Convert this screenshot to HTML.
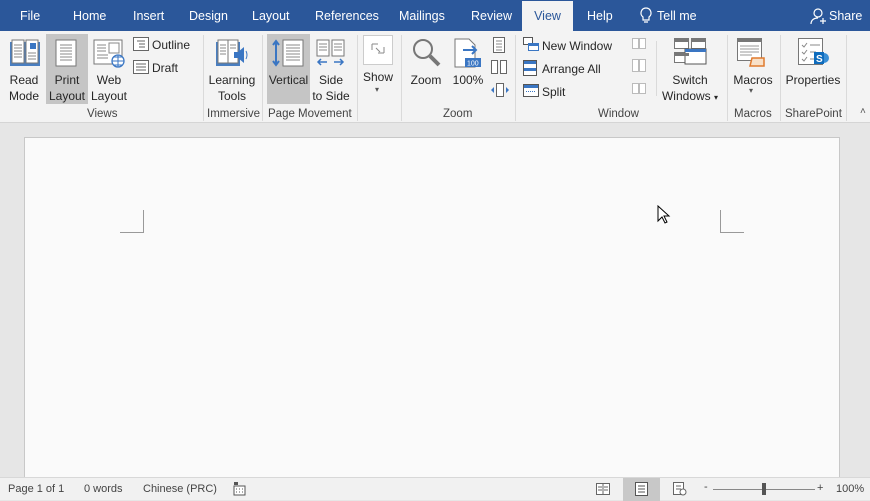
<!DOCTYPE html>
<html><head><meta charset="utf-8"><style>
*{margin:0;padding:0;box-sizing:border-box}
body{width:870px;height:500px;overflow:hidden;position:relative;background:#e6e6e6;font-family:"Liberation Sans",sans-serif;font-size:12px;color:#262626}
.a{position:absolute;white-space:nowrap}
#top{position:absolute;left:0;top:0;width:870px;height:31px;background:#2b579a}
.t{position:absolute;top:9px;color:#fff;font-size:12.5px}
#view{position:absolute;left:522px;top:1px;width:51px;height:30px;background:#f3f3f3;color:#2b579a;text-align:center;padding-top:8px;font-size:12.5px}
#rib{position:absolute;left:0;top:31px;width:870px;height:92px;background:#f3f3f3;border-bottom:1px solid #d5d5d5}
.sep{position:absolute;top:4px;width:1px;height:86px;background:#dadada}
.gl{position:absolute;top:77px;color:#444;font-size:11.5px}
.lbl{position:absolute;text-align:center;line-height:16px;font-size:12px}
.sel{position:absolute;background:#c5c5c5}
#page{position:absolute;left:24px;top:137px;width:816px;height:345px;background:#fafafa;border:1px solid #c8c8c8}
#status{position:absolute;left:0;top:477px;width:870px;height:23px;background:#f1f1f1;border-top:1px solid #d8d8d8;font-size:11px;color:#444}
svg{position:absolute}
</style></head><body>
<div id="top">
<span class="t" style="left:20px">File</span>
<span class="t" style="left:73px">Home</span>
<span class="t" style="left:133px">Insert</span>
<span class="t" style="left:189px">Design</span>
<span class="t" style="left:252px">Layout</span>
<span class="t" style="left:315px">References</span>
<span class="t" style="left:399px">Mailings</span>
<span class="t" style="left:471px">Review</span>
<span class="t" style="left:587px">Help</span>
<svg style="left:639px;top:7px" width="14" height="18" viewBox="0 0 14 18"><path d="M7 1a5 5 0 0 0-3 9v3h6v-3a5 5 0 0 0-3-9zM5 15h4" stroke="#fff" fill="none" stroke-width="1.2"/></svg>
<span class="t" style="left:657px">Tell me</span>
<svg style="left:810px;top:7px" width="18" height="18" viewBox="0 0 18 18"><circle cx="8" cy="6" r="4" stroke="#fff" fill="none" stroke-width="1.2"/><path d="M1 17c0-4 3-6 7-6M13 11v6M10 14h6" stroke="#fff" fill="none" stroke-width="1.2"/></svg>
<span class="t" style="left:829px">Share</span>
</div>
<div id="view">View</div>
<div id="rib">
<div class="sel" style="left:46px;top:3px;width:42px;height:70px"></div>
<div class="sel" style="left:267px;top:3px;width:43px;height:70px"></div>
<!-- Read mode icon -->
<svg style="left:9px;top:8px" width="32" height="28" viewBox="0 0 32 28"><rect x="1" y="3" width="30" height="24" fill="#4a7fc1"/><rect x="3" y="1" width="12" height="23" fill="#fff" stroke="#777"/><rect x="17" y="1" width="12" height="23" fill="#fff" stroke="#777"/><path d="M5 6h8M5 9h8M5 12h8M5 15h8M5 18h8M19 14h8M19 17h8M19 20h8" stroke="#888"/><rect x="21" y="4" width="6" height="6" fill="#3a76c3"/></svg>
<div class="lbl" style="left:2px;top:41px;width:44px">Read<br>Mode</div>
<svg style="left:55px;top:8px" width="22" height="28" viewBox="0 0 22 28"><rect x="1" y="1" width="20" height="26" fill="#fff" stroke="#777"/><path d="M5 6h12M5 9h12M5 12h12M5 15h12M5 18h12M5 21h12" stroke="#888"/></svg>
<div class="lbl" style="left:46px;top:41px;width:42px">Print<br>Layout</div>
<svg style="left:93px;top:8px" width="34" height="30" viewBox="0 0 34 30"><rect x="1" y="1" width="28" height="24" fill="#fff" stroke="#777"/><rect x="16" y="4" width="10" height="10" fill="none" stroke="#888"/><path d="M4 6h9M4 9h9M4 12h9M4 16h11M4 19h11" stroke="#888"/><circle cx="25" cy="22" r="6" fill="#fff" stroke="#3a76c3" stroke-width="1.3"/><path d="M19 22h12M25 16v12M21 18h8M21 26h8" stroke="#3a76c3"/></svg>
<div class="lbl" style="left:88px;top:41px;width:42px">Web<br>Layout</div>
<svg style="left:133px;top:6px" width="16" height="14" viewBox="0 0 16 14"><rect x=".5" y=".5" width="15" height="13" fill="#fff" stroke="#666"/><path d="M4 4h8M6 7h6M6 10h6" stroke="#666"/></svg>
<span class="a" style="left:152px;top:7px">Outline</span>
<svg style="left:133px;top:29px" width="16" height="14" viewBox="0 0 16 14"><rect x=".5" y=".5" width="15" height="13" fill="#fff" stroke="#666"/><path d="M3 4h10M3 7h10M3 10h10" stroke="#666"/></svg>
<span class="a" style="left:152px;top:30px">Draft</span>
<div class="gl" style="left:87px">Views</div>
<div class="sep" style="left:203px"></div>
<!-- learning tools -->
<svg style="left:215px;top:8px" width="34" height="28" viewBox="0 0 34 28"><rect x="1" y="3" width="24" height="24" fill="#4a7fc1"/><rect x="3" y="1" width="10" height="23" fill="#fff" stroke="#777"/><rect x="13" y="1" width="10" height="23" fill="#fff" stroke="#777"/><path d="M5 6h6M5 9h6M5 12h6M5 15h6M15 6h6M15 9h6" stroke="#888"/><path d="M19 13h4l6-5v16l-6-5h-4z" fill="#3a76c3"/><path d="M31 12q2 4 0 8" stroke="#3a76c3" fill="none"/></svg>
<div class="lbl" style="left:204px;top:41px;width:56px">Learning<br>Tools</div>
<div class="gl" style="left:207px">Immersive</div>
<div class="sep" style="left:262px"></div>
<svg style="left:270px;top:8px" width="36" height="28" viewBox="0 0 36 28"><path d="M6 2v24M3 6l3-4 3 4M3 22l3 4 3-4" stroke="#3a76c3" fill="none" stroke-width="2"/><rect x="13" y="1" width="20" height="26" fill="#fff" stroke="#777"/><path d="M16 6h14M16 9h14M16 12h14M16 15h14M16 18h14M16 21h14" stroke="#888"/></svg>
<div class="lbl" style="left:266px;top:41px;width:45px">Vertical</div>
<svg style="left:316px;top:8px" width="30" height="28" viewBox="0 0 30 28"><rect x="1" y="1" width="12" height="16" fill="#fff" stroke="#777"/><rect x="16" y="1" width="12" height="16" fill="#fff" stroke="#777"/><path d="M3 5h8M3 8h8M3 11h8M18 5h8M18 8h8M18 11h8" stroke="#888"/><path d="M2 23h9M5 20l-3 3 3 3M18 23h9M24 20l3 3-3 3" stroke="#3a76c3" fill="none" stroke-width="1.5"/></svg>
<div class="lbl" style="left:310px;top:41px;width:42px">Side<br>to Side</div>
<div class="gl" style="left:268px">Page Movement</div>
<div class="sep" style="left:357px"></div>
<svg style="left:363px;top:4px" width="30" height="30" viewBox="0 0 30 30"><rect x=".5" y=".5" width="29" height="29" fill="#fff" stroke="#ccc"/><path d="M9 9h6M9 9v6M21 12v6M15 18h6M13 13l4 4" stroke="#888" fill="none"/></svg>
<div class="lbl" style="left:358px;top:38px;width:40px">Show</div>
<div class="a" style="left:375px;top:54px;font-size:8px;color:#555">▾</div>
<div class="sep" style="left:401px"></div>
<svg style="left:411px;top:7px" width="30" height="30" viewBox="0 0 30 30"><circle cx="12" cy="11" r="9" fill="none" stroke="#777" stroke-width="2"/><path d="M19 18l9 9" stroke="#777" stroke-width="4"/></svg>
<div class="lbl" style="left:405px;top:41px;width:42px">Zoom</div>
<svg style="left:454px;top:7px" width="30" height="30" viewBox="0 0 30 30"><path d="M1 1h14l6 6v22H1z" fill="#fff" stroke="#777"/><path d="M9 12h13M18 8l4 4-4 4" stroke="#3a76c3" fill="none" stroke-width="2"/><rect x="11" y="20" width="16" height="9" fill="#3a76c3"/><text x="13" y="27.5" font-size="7" fill="#fff" font-family="Liberation Sans">100</text></svg>
<div class="lbl" style="left:448px;top:41px;width:40px">100%</div>
<svg style="left:492px;top:6px" width="14" height="16" viewBox="0 0 14 16"><rect x="1.5" y=".5" width="11" height="15" fill="#fff" stroke="#666"/><path d="M4 4h6M4 7h6M4 10h6M4 13h6" stroke="#888"/></svg>
<svg style="left:491px;top:29px" width="16" height="14" viewBox="0 0 16 14"><rect x=".5" y=".5" width="6" height="13" fill="#fff" stroke="#666"/><rect x="9.5" y=".5" width="6" height="13" fill="#fff" stroke="#666"/></svg>
<svg style="left:491px;top:52px" width="18" height="14" viewBox="0 0 18 14"><rect x="5.5" y=".5" width="7" height="13" fill="#fff" stroke="#666"/><path d="M0 7l3-3v6zM18 7l-3-3v6z" fill="#3a76c3"/></svg>
<div class="gl" style="left:443px">Zoom</div>
<div class="sep" style="left:515px"></div>
<svg style="left:523px;top:6px" width="16" height="14" viewBox="0 0 16 14"><rect x=".5" y=".5" width="9" height="7" fill="#fff" stroke="#555"/><rect x="5" y="6" width="11" height="8" fill="#3a76c3"/><rect x="6" y="9" width="9" height="4" fill="#fff"/></svg>
<span class="a" style="left:542px;top:8px">New Window</span>
<svg style="left:523px;top:29px" width="14" height="16" viewBox="0 0 14 16"><rect x=".5" y=".5" width="13" height="15" fill="#fff" stroke="#555"/><rect x="1" y="1" width="12" height="3" fill="#3a76c3"/><rect x="1" y="8" width="12" height="3" fill="#3a76c3"/></svg>
<span class="a" style="left:542px;top:31px">Arrange All</span>
<svg style="left:523px;top:53px" width="16" height="13" viewBox="0 0 16 13"><rect x=".5" y=".5" width="15" height="12" fill="#fff" stroke="#555"/><rect x="1" y="1" width="14" height="3" fill="#3a76c3"/><path d="M3 7.5h10" stroke="#3a76c3" stroke-dasharray="1 1"/></svg>
<span class="a" style="left:542px;top:54px">Split</span>
<svg style="left:632px;top:7px" width="16" height="60" viewBox="0 0 16 60"><g fill="#fff" stroke="#bbb"><rect x=".5" y=".5" width="6" height="10"/><rect x="7.5" y=".5" width="6" height="10"/><rect x=".5" y="21.5" width="6" height="12"/><rect x="7.5" y="21.5" width="6" height="12"/><rect x=".5" y="45.5" width="6" height="10"/><rect x="7.5" y="45.5" width="6" height="10"/></g></svg>
<div class="sep" style="left:656px;top:10px;height:55px"></div>
<svg style="left:674px;top:7px" width="34" height="30" viewBox="0 0 34 30"><g fill="#fff" stroke="#777"><rect x=".5" y=".5" width="14" height="10"/><rect x="17.5" y=".5" width="14" height="10"/><rect x=".5" y="14.5" width="14" height="10"/></g><rect x="11" y="11" width="21" height="15" fill="#fff" stroke="#555"/><rect x="11" y="11" width="21" height="3" fill="#3a76c3"/><path d="M1 1h14v3H1zM18 1h14v3H18zM1 15h14v3H1z" fill="#777"/></svg>
<div class="lbl" style="left:658px;top:41px;width:64px">Switch<br>Windows <span style="font-size:8px">▾</span></div>
<div class="gl" style="left:598px">Window</div>
<div class="sep" style="left:727px"></div>
<svg style="left:737px;top:7px" width="30" height="30" viewBox="0 0 30 30"><rect x=".5" y=".5" width="24" height="22" fill="#fff" stroke="#777"/><rect x="1" y="1" width="23" height="3" fill="#777"/><path d="M3 8h19M3 11h19M3 14h19M3 17h12" stroke="#999"/><path d="M15 20h12v8H13z" fill="#f8e0c8" stroke="#e07a2e" stroke-width="1.5"/></svg>
<div class="lbl" style="left:730px;top:41px;width:46px">Macros</div>
<div class="a" style="left:749px;top:55px;font-size:8px;color:#555">▾</div>
<div class="gl" style="left:734px">Macros</div>
<div class="sep" style="left:780px"></div>
<svg style="left:798px;top:7px" width="32" height="30" viewBox="0 0 32 30"><rect x=".5" y=".5" width="24" height="26" fill="#fff" stroke="#777"/><path d="M4 7l2 2 3-4M4 14l2 2 3-4M4 21l2 2 3-4M12 7h10M12 14h6M12 21h4" stroke="#888" fill="none"/><circle cx="26" cy="20" r="5" fill="#3a8fd6"/><rect x="16" y="14" width="10" height="12" fill="#0f6cbd"/><text x="18" y="24" font-size="10" fill="#fff" font-weight="bold" font-family="Liberation Sans">S</text></svg>
<div class="lbl" style="left:783px;top:41px;width:60px">Properties</div>
<div class="gl" style="left:785px">SharePoint</div>
<div class="sep" style="left:846px"></div>
<div class="a" style="left:860px;top:75px;font-size:10px;color:#555">˄</div>
</div>
<div id="page">
<div class="a" style="left:95px;top:72px;width:24px;height:23px;border-right:1px solid #999;border-bottom:1px solid #999"></div>
<div class="a" style="left:695px;top:72px;width:24px;height:23px;border-left:1px solid #999;border-bottom:1px solid #999"></div>
<svg style="left:632px;top:67px" width="14" height="20" viewBox="0 0 14 20"><path d="M1 1v15l4-4 3 6 2-1-3-6h5z" fill="#fff" stroke="#000"/></svg>
</div>
<div id="status">
<span class="a" style="left:8px;top:5px">Page 1 of 1</span>
<span class="a" style="left:84px;top:5px">0 words</span>
<span class="a" style="left:143px;top:5px">Chinese (PRC)</span>
<svg style="left:233px;top:4px" width="14" height="14" viewBox="0 0 14 14"><rect x="1" y="4" width="11" height="9" fill="#fff" stroke="#555"/><path d="M3 7h1M6 7h1M9 7h1M3 10h1M6 10h1M9 10h1" stroke="#555"/><rect x="1" y="0" width="4" height="3" fill="#555"/></svg>
<svg style="left:596px;top:4px" width="14" height="14" viewBox="0 0 14 14"><rect x=".5" y="1.5" width="13" height="11" fill="#fff" stroke="#666"/><path d="M7 2v10M2 5h4M2 8h4M8 5h4M8 8h4" stroke="#666"/></svg>
<div class="a" style="left:623px;top:0;width:37px;height:23px;background:#c8c8c8"></div>
<svg style="left:635px;top:4px" width="13" height="14" viewBox="0 0 13 14"><rect x=".5" y=".5" width="12" height="13" fill="#fff" stroke="#555"/><path d="M3 4h7M3 7h7M3 10h7" stroke="#555"/></svg>
<svg style="left:673px;top:4px" width="14" height="14" viewBox="0 0 14 14"><rect x=".5" y=".5" width="10" height="12" fill="#fff" stroke="#666"/><path d="M3 4h5M3 7h5" stroke="#666"/><circle cx="10" cy="10" r="3" fill="#fff" stroke="#666"/></svg>
<span class="a" style="left:704px;top:3px">-</span>
<div class="a" style="left:713px;top:11px;width:102px;height:1px;background:#888"></div>
<div class="a" style="left:762px;top:5px;width:4px;height:12px;background:#555"></div>
<span class="a" style="left:817px;top:4px">+</span>
<span class="a" style="left:836px;top:5px">100%</span>
</div>
</body></html>
